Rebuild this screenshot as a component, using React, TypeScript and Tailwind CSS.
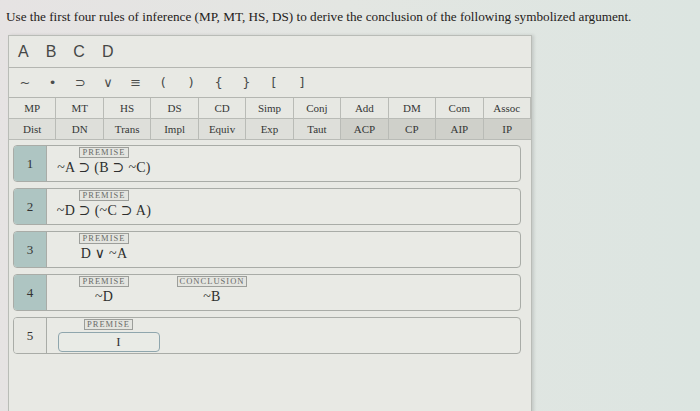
import React from 'react';

const serif = { fontFamily: '"Liberation Serif", "DejaVu Serif", serif' };

const topRules = ['MP', 'MT', 'HS', 'DS', 'CD', 'Simp', 'Conj', 'Add', 'DM', 'Com', 'Assoc'];
const bottomRules = ['Dist', 'DN', 'Trans', 'Impl', 'Equiv', 'Exp', 'Taut', 'ACP', 'CP', 'AIP', 'IP'];
const symbols = ['~', '•', '⊃', '∨', '≡', '(', ')', '{', '}', '[', ']'];

function Label({ text }: { text: string }) {
  return (
    <span className="border border-[#9c9e9a] bg-[#e4e5e0] px-[2px] text-[8.5px] leading-[9px] tracking-[0.12em] text-[#6a6c69]">
      {text}
    </span>
  );
}

function Cell({ label, formula, width = 'w-[96px]' }: { label: string; formula: string; width?: string }) {
  return (
    <div className={`flex ${width} flex-col items-center`}>
      <Label text={label} />
      <span className="mt-[2px] whitespace-pre text-[14px] leading-[16px] tracking-[0.02em] text-[#2d2f2e]">{formula}</span>
    </div>
  );
}

function ProofLine({ n, teal = true, children }: { n: number; teal?: boolean; children: React.ReactNode }) {
  return (
    <div className="flex h-[37px] overflow-hidden rounded-[4px] border border-[#a9aca7] bg-[#e9eae5]">
      <div
        className={`flex w-[33px] shrink-0 items-center justify-center border-r border-[#a9aca7] text-[13px] text-[#333] ${
          teal ? 'bg-[#aec5c2]' : 'bg-[#e6e7e2]'
        }`}
      >
        {n}
      </div>
      <div className="flex pt-[1px] pl-[9px]">{children}</div>
    </div>
  );
}

export default function App() {
  return (
    <div className="h-[411px] w-[700px] overflow-hidden bg-gradient-to-r from-[#e6e3e3] via-[#e3e6e2] to-[#dce5e1]" style={serif}>
      {/* Question */}
      <p className="pt-[9px] pl-[6px] text-[13.2px] leading-[16px] text-[#1f2120]">
        Use the first four rules of inference (MP, MT, HS, DS) to derive the conclusion of the following symbolized argument.
      </p>

      {/* Proof panel */}
      <div className="mt-[10px] ml-[8px] h-[400px] w-[524px] border border-[#b9bcb7] bg-[#e8e9e4] shadow-[2px_0_3px_rgba(0,0,0,0.12)]">
        {/* Variables */}
        <div
          className="flex h-[32px] items-center gap-[17px] border-b border-[#b4b6b1] pl-[9px] text-[16px] text-[#454746]"
          style={{ fontFamily: '"Liberation Sans", Arial, sans-serif' }}
        >
          <span>A</span>
          <span>B</span>
          <span>C</span>
          <span>D</span>
        </div>

        {/* Symbols */}
        <div
          className="flex h-[30px] items-center border-b border-[#b4b6b1] pl-[2px] text-[13px] text-[#4a4c4b]"
          style={{ fontFamily: '"DejaVu Sans", sans-serif' }}
        >
          {symbols.map(s => (
            <span key={s} className="w-[27.7px] text-center">
              {s}
            </span>
          ))}
        </div>

        {/* Rules */}
        <div className="grid grid-cols-11 text-[11px] text-[#353736]">
          {topRules.map(r => (
            <div key={r} className="flex h-[21px] items-center justify-center border-r border-b border-[#b9bbb6] bg-[#e7e8e3] last:border-r-0">
              {r}
            </div>
          ))}
          {bottomRules.map((r, i) => (
            <div
              key={r}
              className={`flex h-[21px] items-center justify-center border-r border-b border-[#b9bbb6] last:border-r-0 ${
                i >= 7 ? 'bg-[#cfd0ca]' : 'bg-[#dedfda]'
              }`}
            >
              {r}
            </div>
          ))}
        </div>

        {/* Lines */}
        <div className="mt-[5px] mr-[10px] ml-[4px] flex flex-col gap-[6px]">
          <ProofLine n={1}>
            <Cell label="PREMISE" formula="~A ⊃ (B ⊃ ~C)" />
          </ProofLine>
          <ProofLine n={2}>
            <Cell label="PREMISE" formula="~D ⊃ (~C ⊃ A)" />
          </ProofLine>
          <ProofLine n={3}>
            <Cell label="PREMISE" formula="D ∨ ~A" />
          </ProofLine>
          <ProofLine n={4}>
            <Cell label="PREMISE" formula="~D" />
            <div className="w-[12px]" />
            <Cell label="CONCLUSION" formula="~B" />
          </ProofLine>
          <ProofLine n={5} teal={false}>
            <div className="flex w-[102px] flex-col items-center pl-[3px]">
              <Label text="PREMISE" />
              <div className="mt-[2px] flex h-[20px] w-[102px] items-center justify-center rounded-[4px] border border-[#8fa6ad] bg-[#e9ebe6] text-[13px] text-[#333]">
                <span className="ml-[20px]">I</span>
              </div>
            </div>
          </ProofLine>
        </div>
      </div>
    </div>
  );
}
